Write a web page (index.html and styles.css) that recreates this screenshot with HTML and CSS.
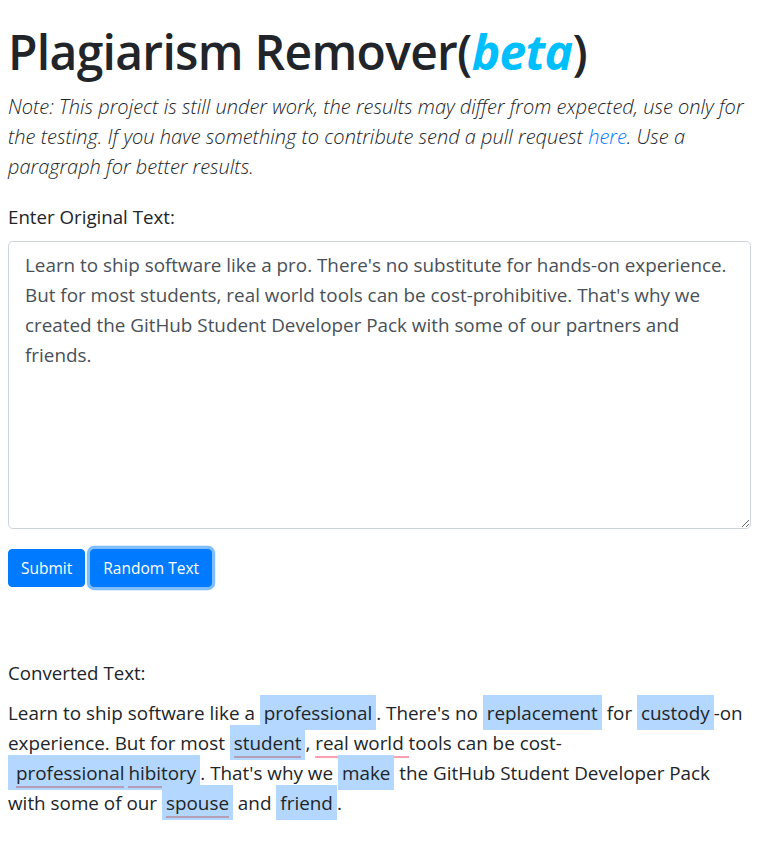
FILE: index.html
```html
<!DOCTYPE html>
<html lang="en">
<head>
<meta charset="utf-8">
<title>Plagiarism Remover</title>
<link rel="stylesheet" href="styles.css">
</head>
<body>
<main class="page">
  <h1 class="title">Plagiarism Remover(<em class="beta">beta</em>)</h1>
  <p class="note">Note: This project is still under work, the results may differ from expected, use only for the testing. If you have something to contribute send a pull request <a class="link" href="#">here</a>. Use a paragraph for better results.</p>
  <form class="form">
    <label class="label" for="original">Enter Original Text:</label>
    <textarea class="input" id="original">Learn to ship software like a pro. There's no substitute for hands-on experience. But for most students, real world tools can be cost-prohibitive. That's why we created the GitHub Student Developer Pack with some of our partners and friends.</textarea>
    <div class="actions">
      <button type="button" class="btn">Submit</button>
      <button type="button" class="btn btn-focus">Random Text</button>
    </div>
  </form>
  <section class="result">
    <div class="label">Converted Text:</div>
    <p class="output">Learn to ship software like a <mark class="hl">professional</mark>. There's no <mark class="hl">replacement</mark> for <mark class="hl">custody</mark>-on experience. But for most <mark class="hl"><span class="ul ul-in">student</span></mark>, <span class="ul ul-out">real world </span>tools can be cost-<mark class="hl hl-first"><span class="ul ul-in">professional</span></mark><mark class="hl hl-last"><span class="ul ul-in">hibitory</span></mark>. That's why we <mark class="hl">make</mark> the GitHub Student Developer Pack with some of our <mark class="hl"><span class="ul ul-in">spouse</span></mark> and <mark class="hl">friend</mark>.</p>
  </section>
</main>
</body>
</html>
```

FILE: styles.css
```css
* { box-sizing: border-box; }

html, body {
  margin: 0;
  background: #fff;
}

body {
  font-family: "Open Sans", "Noto Sans", sans-serif;
  color: #212529;
  font-size: 18.7px;
  line-height: 30px;
}

.page {
  padding: 23px 7px 30px 8px;
}

.title {
  margin: 0 0 11px;
  font-size: 48px;
  font-weight: 600;
  line-height: 1.2;
  letter-spacing: -0.7px;
  color: #212529;
}

.beta {
  color: #00bfff;
  font-style: italic;
  font-weight: 700;
}

.note {
  margin: 0 0 20px;
  font-style: italic;
  font-weight: 300;
  font-size: 20px;
  line-height: 30px;
  color: #212529;
}

.link {
  color: #007bff;
  text-decoration: none;
}

.form {
  margin: 0;
}

.label {
  display: block;
  margin: 0 0 9px;
  line-height: 30px;
}

.input {
  display: block;
  width: 100%;
  height: 288px;
  margin: 0;
  padding: 8px 16px;
  font-family: inherit;
  font-size: 18.85px;
  line-height: 30px;
  color: #495057;
  background: #fff;
  border: 1px solid #ced4da;
  border-radius: 4.8px;
  outline: none;
}

.actions {
  display: flex;
  gap: 4px;
  margin-top: 20px;
}

.btn {
  font-family: inherit;
  font-size: 15.5px;
  line-height: 24px;
  padding: 6px 12px;
  color: #fff;
  background: #007bff;
  border: 1px solid #007bff;
  border-radius: 4px;
  cursor: pointer;
}

.btn-focus {
  margin-left: 1px;
  box-shadow: 0 0 0 3.2px rgba(0, 123, 255, 0.5);
}

.result {
  margin-top: 71px;
}

.result .label {
  margin-bottom: 10px;
}

.output {
  margin: 0;
  font-size: 18.87px;
  line-height: 30px;
}

.hl {
  background: #b3d7ff;
  color: #212529;
  padding: 4.5px 4px;
}

.hl-first {
  padding-left: 8px;
  padding-right: 2px;
}

.hl-last {
  padding-left: 2px;
}

.ul {
  border-bottom: 2px solid #ff9fb0;
}

.ul-in {
  border-bottom-color: #b49eb5;
}

.ul-out {
  border-bottom-color: #ff9fb0;
}
```
